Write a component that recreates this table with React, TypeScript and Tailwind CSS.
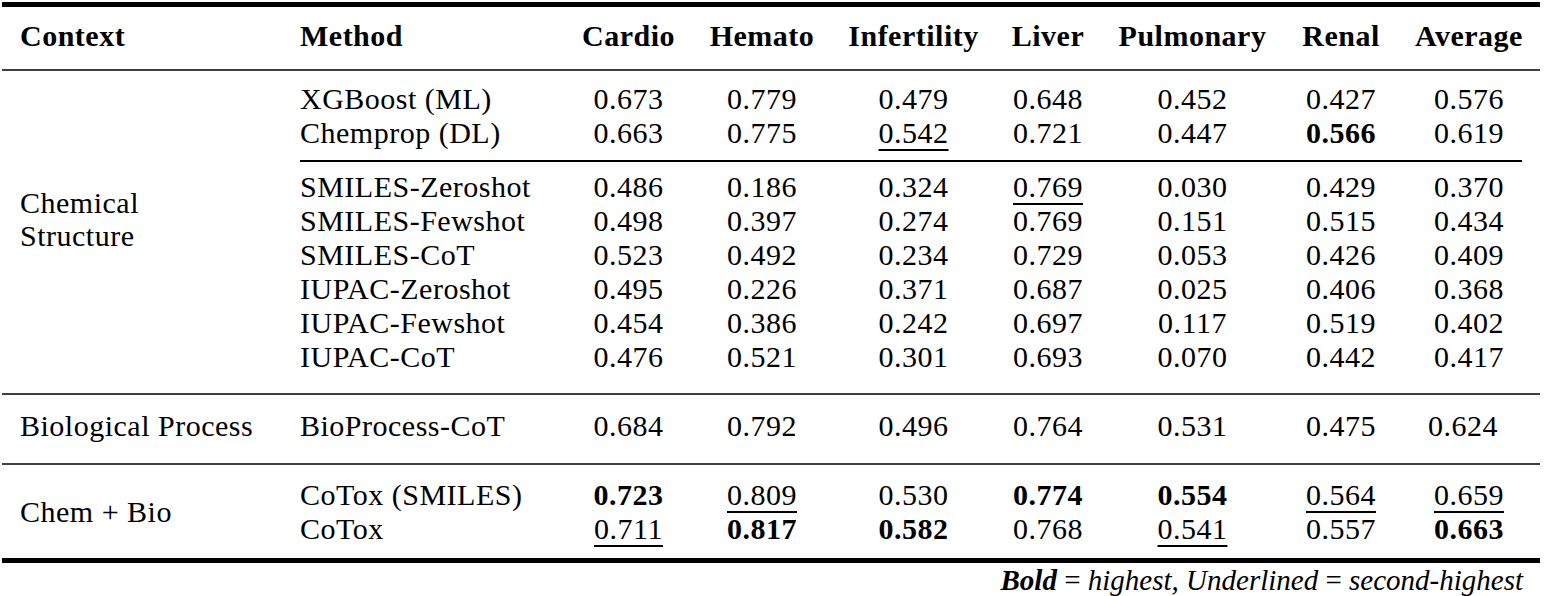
import React from "react";
import clsx from "clsx";

const metrics = ["Cardio", "Hemato", "Infertility", "Liver", "Pulmonary", "Renal", "Average"];

// "*" = bold (highest), "_" = underlined (second-highest)
const classical = [
  { method: "XGBoost (ML)", values: ["0.673", "0.779", "0.479", "0.648", "0.452", "0.427", "0.576"] },
  { method: "Chemprop (DL)", values: ["0.663", "0.775", "_0.542", "0.721", "0.447", "*0.566", "0.619"] },
];

const llm = [
  { method: "SMILES-Zeroshot", values: ["0.486", "0.186", "0.324", "_0.769", "0.030", "0.429", "0.370"] },
  { method: "SMILES-Fewshot", values: ["0.498", "0.397", "0.274", "0.769", "0.151", "0.515", "0.434"] },
  { method: "SMILES-CoT", values: ["0.523", "0.492", "0.234", "0.729", "0.053", "0.426", "0.409"] },
  { method: "IUPAC-Zeroshot", values: ["0.495", "0.226", "0.371", "0.687", "0.025", "0.406", "0.368"] },
  { method: "IUPAC-Fewshot", values: ["0.454", "0.386", "0.242", "0.697", "0.117", "0.519", "0.402"] },
  { method: "IUPAC-CoT", values: ["0.476", "0.521", "0.301", "0.693", "0.070", "0.442", "0.417"] },
];

const bio = [
  { method: "BioProcess-CoT", values: ["0.684", "0.792", "0.496", "0.764", "0.531", "0.475", "0.624"] },
];

const cotox = [
  { method: "CoTox (SMILES)", values: ["*0.723", "_0.809", "0.530", "*0.774", "*0.554", "_0.564", "_0.659"] },
  { method: "CoTox", values: ["_0.711", "*0.817", "*0.582", "0.768", "_0.541", "0.557", "*0.663"] },
];

const grid = "grid grid-cols-[283px_127px_140px_163px_106px_183px_114px_142px] h-[34px] items-center";

function Row({ method, values, shiftLast }: { method: string; values: string[]; shiftLast?: boolean }) {
  return (
    <div className={grid}>
      <div className="pl-[18px] whitespace-nowrap">{method}</div>
      {values.map((raw, i) => {
        const bold = raw.startsWith("*");
        const under = raw.startsWith("_");
        const v = bold || under ? raw.slice(1) : raw;
        return (
          <div key={i} className={clsx("text-center whitespace-nowrap", shiftLast && i === 6 && "pr-[12px]")}>
            <span
              className={clsx(
                bold && "font-bold",
                under && "underline decoration-[1.5px] underline-offset-[6px]"
              )}
            >
              {v}
            </span>
          </div>
        );
      })}
    </div>
  );
}

export default function App() {
  return (
    <div className="w-[1544px] h-[596px] bg-white text-black font-['Liberation_Serif','Times_New_Roman',serif] text-[30px] leading-[34px] tracking-[0.5px] overflow-hidden">
      <div className="ml-[2px] w-[1538px] pt-[2px]">
        <div className="h-[5px] bg-black" />

        {/* header */}
        <div className="flex pt-[12px] pb-[16px] font-bold">
          <div className="w-[280px] pl-[18px]">Context</div>
          <div className={grid}>
            <div className="pl-[18px]">Method</div>
            {metrics.map((m) => (
              <div key={m} className="text-center whitespace-nowrap">
                {m}
              </div>
            ))}
          </div>
        </div>
        <div className="h-[2px] bg-[#404040]" />

        {/* chemical structure */}
        <div className="flex pt-[11px] pb-[19px]">
          <div className="w-[280px] pl-[18px] pt-[104px] leading-[33px]">
            Chemical
            <br />
            Structure
          </div>
          <div className="flex flex-col">
            {classical.map((r) => (
              <Row key={r.method} {...r} />
            ))}
            <div className="pt-[10px] pb-[8px] px-[18px]">
              <div className="h-[1.5px] bg-black" />
            </div>
            {llm.map((r) => (
              <Row key={r.method} {...r} />
            ))}
          </div>
        </div>
        <div className="h-[2px] bg-[#404040]" />

        {/* biological process */}
        <div className="flex pt-[14px] pb-[20px]">
          <div className="w-[280px] pl-[18px] flex items-center whitespace-nowrap">Biological Process</div>
          <div className="flex flex-col">
            {bio.map((r) => (
              <Row key={r.method} {...r} shiftLast />
            ))}
          </div>
        </div>
        <div className="h-[2px] bg-[#404040]" />

        {/* chem + bio */}
        <div className="flex pt-[13px] pb-[12px]">
          <div className="w-[280px] pl-[18px] flex items-center">Chem + Bio</div>
          <div className="flex flex-col">
            {cotox.map((r) => (
              <Row key={r.method} {...r} />
            ))}
          </div>
        </div>
        <div className="h-[5px] bg-black" />

        <div className="text-right pr-[17px] italic tracking-normal text-[29px]">
          <span className="font-bold">Bold</span>
          <span className="not-italic"> = </span>
          highest,{" "}
          <span className="underline decoration-[1.5px] underline-offset-[6px]">Underlined</span>
          <span className="not-italic"> = </span>
          second-highest
        </div>
      </div>
    </div>
  );
}
